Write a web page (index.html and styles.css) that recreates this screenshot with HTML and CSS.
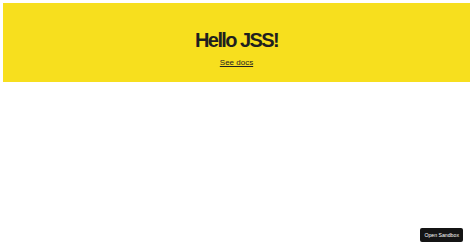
FILE: index.html
```html
<!DOCTYPE html>
<html>
<head>
<meta charset="utf-8">
<link rel="stylesheet" href="styles.css">
</head>
<body>
<header class="hero">
  <h1 class="title">Hello JSS!</h1>
  <a class="link" href="#">See docs</a>
</header>
<a class="sandbox" href="#">Open Sandbox</a>
</body>
</html>
```

FILE: styles.css
```css
html, body {
  margin: 0;
  padding: 0;
  background: #ffffff;
}
body {
  padding: 3px 4px 0 3px;
  font-family: "Liberation Sans", Arial, Helvetica, sans-serif;
}
.hero {
  background: #f7df1e;
  height: 79px;
  display: flex;
  flex-direction: column;
  align-items: center;
  padding-top: 25px;
  box-sizing: border-box;
}
.title {
  margin: 0;
  font-size: 20px;
  line-height: 24px;
  font-weight: bold;
  letter-spacing: -1.6px;
  color: #1f1f1f;
}
.link {
  margin-top: 6px;
  font-size: 8px;
  line-height: 10px;
  color: #222;
  text-decoration: underline;
}
.sandbox {
  position: fixed;
  right: 11px;
  bottom: 6px;
  background: #141414;
  color: #fff;
  font-size: 5.2px;
  line-height: 14px;
  padding: 0 4px;
  border-radius: 2px;
  text-decoration: none;
}
```
